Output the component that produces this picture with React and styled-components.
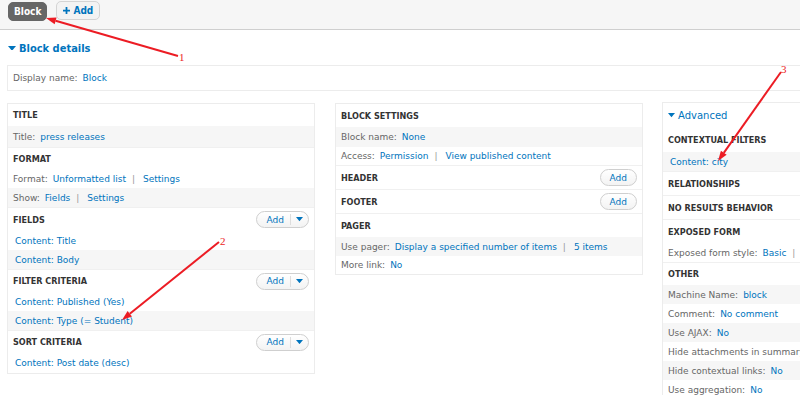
import React from 'react';
import styled, { createGlobalStyle } from 'styled-components';

const GlobalStyle = createGlobalStyle`
  html, body {
    margin: 0;
    padding: 0;
    background: #fff;
    overflow: hidden;
  }
  body {
    font-family: "DejaVu Sans", Verdana, sans-serif;
    font-size: 9px;
    color: #333;
  }
`;

const boldFont = `"DejaVu Sans Condensed", "DejaVu Sans", Verdana, sans-serif`;

const Page = styled.div`
  position: relative;
  width: 800px;
  height: 395px;
  overflow: hidden;
`;

const TopBar = styled.div`
  height: 30px;
  box-sizing: border-box;
  background: #f6f6f6;
  border-bottom: 1px solid #cfcfcf;
  display: flex;
  align-items: flex-start;
  gap: 9px;
  padding: 1px 0 0 8px;
`;

const Tab = styled.div`
  height: 19px;
  box-sizing: border-box;
  padding: 0 ${(p) => (p.$active ? '5px' : '6px')};
  display: flex;
  align-items: center;
  border-radius: 5px;
  font-family: ${boldFont};
  font-weight: bold;
  font-size: 10px;
  background: ${(p) => (p.$active ? '#666' : '#f3f3f3')};
  color: ${(p) => (p.$active ? '#fff' : '#0074bd')};
  border: 1px solid ${(p) => (p.$active ? '#666' : '#d4d4d4')};
  margin-top: ${(p) => (p.$active ? '1px' : '0')};
  gap: 3px;
`;

const Body = styled.div`
  padding: 0 0 0 7px;
`;

const DetailsTitle = styled.div`
  margin: 10px 0 0 1px;
  height: 16px;
  display: flex;
  align-items: center;
  gap: 3px;
  color: #0074bd;
  font-family: ${boldFont};
  font-weight: bold;
  font-size: 11px;
`;

const DisplayBox = styled.div`
  margin-top: 9px;
  height: 26px;
  box-sizing: border-box;
  border: 1px solid #ececec;
  border-right: none;
  display: flex;
  align-items: center;
  padding-left: 5px;
`;

const Columns = styled.div`
  margin-top: 12px;
  display: grid;
  grid-template-columns: 308px 308px 308px;
  column-gap: 20px;
  align-items: start;
`;

const Column = styled.div`
  border: 1px solid #ececec;
  margin-top: ${(p) => p.$offset || 0}px;
  ${(p) => (p.$open ? 'border-right: none; margin-left: -1px;' : '')}
`;

const Header = styled.div`
  height: ${(p) => p.$h || 22}px;
  display: flex;
  align-items: center;
  justify-content: space-between;
  padding: 0 5px 0 5px;
  font-family: ${boldFont};
  font-weight: bold;
  font-size: 9px;
  color: #333;
  border-top: ${(p) => (p.$first ? 'none' : '1px solid #f0f0f0')};
  box-sizing: border-box;
`;

const Row = styled.div`
  height: ${(p) => p.$h || 19}px;
  display: flex;
  align-items: center;
  padding-left: ${(p) => (p.$inset ? 7 : 5)}px;
  background: ${(p) => (p.$alt ? '#f6f6f6' : '#fff')};
  color: #666;
  white-space: nowrap;
`;

const Label = styled.span`
  color: #666;
  margin-right: 5px;
`;

const Link = styled.span`
  color: #0074bd;
`;

const Sep = styled.span`
  color: #999;
  margin: 0 8px 0 6px;
`;

const AddButton = styled.div`
  height: 17px;
  box-sizing: border-box;
  border: 1px solid #cfcfcf;
  border-radius: 9px;
  background: linear-gradient(#fff, #f3f3f3);
  display: flex;
  align-items: center;
  color: #0074bd;
  font-family: "DejaVu Sans", Verdana, sans-serif;
  font-weight: normal;
  font-size: 9px;
`;

const AddLabel = styled.span`
  padding: 0 ${(p) => (p.$split ? '6px 0 10px' : '9px')};
`;

const Caret = styled.span`
  border-left: 1px solid #ddd;
  height: 11px;
  display: flex;
  align-items: center;
  padding: 0 5px 0 5px;
`;

const AdvancedToggle = styled.div`
  height: 25px;
  display: flex;
  align-items: center;
  gap: 3px;
  padding-left: 5px;
  color: #0074bd;
  font-size: 10px;
`;

const Overlay = styled.svg`
  position: absolute;
  left: 0;
  top: 0;
  pointer-events: none;
`;

const Tri = ({ size = 7 }) => (
  <svg width={size} height={size * 0.6} viewBox="0 0 10 6">
    <path d="M0 0 L10 0 L5 6 Z" fill="#0074bd" />
  </svg>
);

const Plus = () => (
  <svg width="7" height="7" viewBox="0 0 8 8">
    <path d="M3 0h2v3h3v2H5v3H3V5H0V3h3z" fill="#0074bd" />
  </svg>
);

const Add = ({ split }) => (
  <AddButton>
    <AddLabel $split={split}>Add</AddLabel>
    {split ? (
      <Caret>
        <Tri size={7} />
      </Caret>
    ) : null}
  </AddButton>
);

const Arrow = ({ x1, y1, x2, y2, n, lx, ly }) => {
  const a = Math.atan2(y2 - y1, x2 - x1);
  const len = 10;
  const w = 3.5;
  const bx = x2 - len * Math.cos(a);
  const by = y2 - len * Math.sin(a);
  const px = -Math.sin(a) * w;
  const py = Math.cos(a) * w;
  return (
    <g>
      <line x1={x1} y1={y1} x2={bx} y2={by} stroke="#ec1c24" strokeWidth="2" />
      <path d={`M${x2} ${y2} L${bx + px} ${by + py} L${bx - px} ${by - py} Z`} fill="#ec1c24" />
      <text x={lx} y={ly} fill="#ec1c24" fontSize="11" fontFamily='"Liberation Serif", serif'>
        {n}
      </text>
    </g>
  );
};

const App = () => {
  return (
    <Page>
      <GlobalStyle />
      <TopBar>
        <Tab $active>Block</Tab>
        <Tab>
          <Plus />
          Add
        </Tab>
      </TopBar>
      <Body>
        <DetailsTitle>
          <Tri size={8} />
          Block details
        </DetailsTitle>
        <DisplayBox>
          <Label>Display name:</Label>
          <Link>Block</Link>
        </DisplayBox>
        <Columns>
          <Column>
            <Header $first>TITLE</Header>
            <Row $alt $h={21}>
              <Label>Title:</Label>
              <Link>press releases</Link>
            </Row>
            <Header>FORMAT</Header>
            <Row>
              <Label>Format:</Label>
              <Link>Unformatted list</Link>
              <Sep>|</Sep>
              <Link>Settings</Link>
            </Row>
            <Row $alt>
              <Label>Show:</Label>
              <Link>Fields</Link>
              <Sep>|</Sep>
              <Link>Settings</Link>
            </Row>
            <Header $h={24}>
              FIELDS
              <Add split />
            </Header>
            <Row $inset>
              <Link>Content: Title</Link>
            </Row>
            <Row $alt $inset>
              <Link>Content: Body</Link>
            </Row>
            <Header $h={23}>
              FILTER CRITERIA
              <Add split />
            </Header>
            <Row $inset>
              <Link>Content: Published (Yes)</Link>
            </Row>
            <Row $alt $inset>
              <Link>Content: Type (= Student)</Link>
            </Row>
            <Header $h={23}>
              SORT CRITERIA
              <Add split />
            </Header>
            <Row $inset $h={20}>
              <Link>Content: Post date (desc)</Link>
            </Row>
          </Column>

          <Column>
            <Header $first $h={23}>BLOCK SETTINGS</Header>
            <Row $alt $h={20}>
              <Label>Block name:</Label>
              <Link>None</Link>
            </Row>
            <Row $h={18}>
              <Label>Access:</Label>
              <Link>Permission</Link>
              <Sep>|</Sep>
              <Link>View published content</Link>
            </Row>
            <Header $h={24}>
              HEADER
              <Add />
            </Header>
            <Header $h={24}>
              FOOTER
              <Add />
            </Header>
            <Header $h={24}>PAGER</Header>
            <Row $alt>
              <Label>Use pager:</Label>
              <Link>Display a specified number of items</Link>
              <Sep>|</Sep>
              <Link>5 items</Link>
            </Row>
            <Row $h={18}>
              <Label>More link:</Label>
              <Link>No</Link>
            </Row>
          </Column>

          <Column $open $offset={-1}>
            <AdvancedToggle>
              <Tri size={7} />
              Advanced
            </AdvancedToggle>
            <Header $first $h={24}>CONTEXTUAL FILTERS</Header>
            <Row $alt $inset>
              <Link>Content: city</Link>
            </Row>
            <Header $h={24}>RELATIONSHIPS</Header>
            <Header $h={24}>NO RESULTS BEHAVIOR</Header>
            <Header $h={24}>EXPOSED FORM</Header>
            <Row>
              <Label>Exposed form style:</Label>
              <Link>Basic</Link>
              <Sep>|</Sep>
            </Row>
            <Header $h={23}>OTHER</Header>
            <Row $alt>
              <Label>Machine Name:</Label>
              <Link>block</Link>
            </Row>
            <Row>
              <Label>Comment:</Label>
              <Link>No comment</Link>
            </Row>
            <Row $alt>
              <Label>Use AJAX:</Label>
              <Link>No</Link>
            </Row>
            <Row>
              <Label>Hide attachments in summary:</Label>
              <Link>No</Link>
            </Row>
            <Row $alt>
              <Label>Hide contextual links:</Label>
              <Link>No</Link>
            </Row>
            <Row>
              <Label>Use aggregation:</Label>
              <Link>No</Link>
            </Row>
          </Column>
        </Columns>
      </Body>
      <Overlay width="800" height="395" viewBox="0 0 800 395">
        <Arrow x1={178} y1={56} x2={46} y2={18} n="1" lx={179} ly={61} />
        <Arrow x1={219} y1={242} x2={122} y2={320} n="2" lx={220} ly={245} />
        <Arrow x1={781} y1={72} x2={718} y2={161} n="3" lx={781} ly={73} />
      </Overlay>
    </Page>
  );
};

export default App;
